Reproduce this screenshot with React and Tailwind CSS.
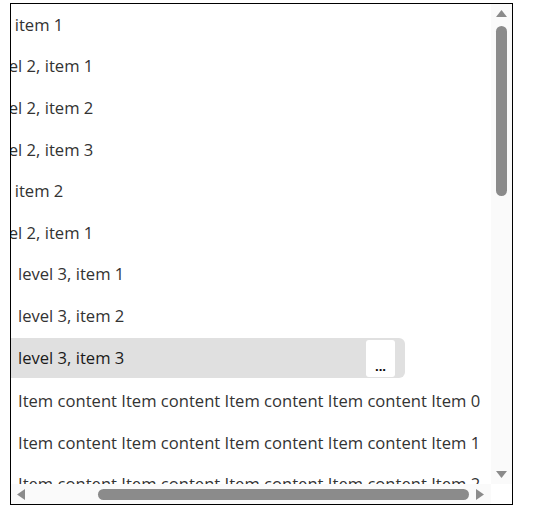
const rows = [
  { text: "level 1, item 1", pad: "pl-[6px]" },
  { text: "level 2, item 1", pad: "pl-[36px]" },
  { text: "level 2, item 2", pad: "pl-[36px]" },
  { text: "level 2, item 3", pad: "pl-[36px]" },
  { text: "level 1, item 2", pad: "pl-[6px]" },
  { text: "level 2, item 1", pad: "pl-[36px]" },
  { text: "level 3, item 1", pad: "pl-[67px]" },
  { text: "level 3, item 2", pad: "pl-[67px]" },
  { text: "level 3, item 3", pad: "pl-[67px]", selected: true },
  { text: "Item content Item content Item content Item content Item 0", pad: "pl-[67px]" },
  { text: "Item content Item content Item content Item content Item 1", pad: "pl-[67px]" },
  { text: "Item content Item content Item content Item content Item 2", pad: "pl-[67px]" },
  { text: "Item content Item content Item content Item content Item 3", pad: "pl-[67px]" },
];

function Row({ row }) {
  if (row.selected) {
    return (
      <div className="pt-[0.8px] pb-[2.8px]">
        <div className="flex h-10 w-[454px] items-center rounded-r-md bg-[#e0e0e0] pl-[67px] pr-[10px] text-[#1a1a1a]">
          <span className="flex-1 whitespace-nowrap">{row.text}</span>
          <button className="flex h-[37px] w-[29px] items-end justify-center rounded-[3px] bg-white pb-[4px] text-[13px] font-bold leading-none text-black">
            ...
          </button>
        </div>
      </div>
    );
  }
  return (
    <div className="py-[0.8px]">
      <div className={`flex h-10 items-center whitespace-nowrap text-[#333333] ${row.pad}`}>
        {row.text}
      </div>
    </div>
  );
}

export default function App() {
  return (
    <div className="bg-white pl-[10px] pt-[3px]" style={{ fontFamily: '"Open Sans", "Noto Sans", sans-serif' }}>
      <div className="flex h-[502px] w-[503px] flex-col border border-black bg-white text-[16.6px]">
        <div className="flex min-h-0 flex-1">
          {/* viewport */}
          <div className="min-w-0 flex-1 overflow-hidden">
            <div className="-ml-[60px] w-[620px] pt-[0.5px]">
              {rows.map((row, i) => (
                <Row key={i} row={row} />
              ))}
            </div>
          </div>
          {/* vertical scrollbar */}
          <div className="flex w-[21px] flex-col items-center bg-[#fafafa]">
            <svg width="11" height="7" viewBox="0 0 11 7" className="mt-[6px] mb-[9px]">
              <polygon points="5.5,0 11,7 0,7" fill="#8b8b8b" />
            </svg>
            <div className="h-[170px] w-[11px] rounded-full bg-[#8b8b8b]" />
            <div className="flex-1" />
            <svg width="11" height="7" viewBox="0 0 11 7" className="mb-[6px]">
              <polygon points="0,0 11,0 5.5,7" fill="#8b8b8b" />
            </svg>
          </div>
        </div>
        {/* horizontal scrollbar */}
        <div className="flex h-[20px]">
          <div className="flex flex-1 items-center bg-[#fafafa]">
            <svg width="8" height="11" viewBox="0 0 8 11" className="ml-[6px]">
              <polygon points="8,0 8,11 0,5.5" fill="#8b8b8b" />
            </svg>
            <div className="ml-[73px] h-[11px] w-[371px] rounded-full bg-[#8b8b8b]" />
            <svg width="8" height="11" viewBox="0 0 8 11" className="ml-[7px]">
              <polygon points="0,0 8,5.5 0,11" fill="#8b8b8b" />
            </svg>
          </div>
          <div className="w-[21px] bg-white" />
        </div>
      </div>
    </div>
  );
}
